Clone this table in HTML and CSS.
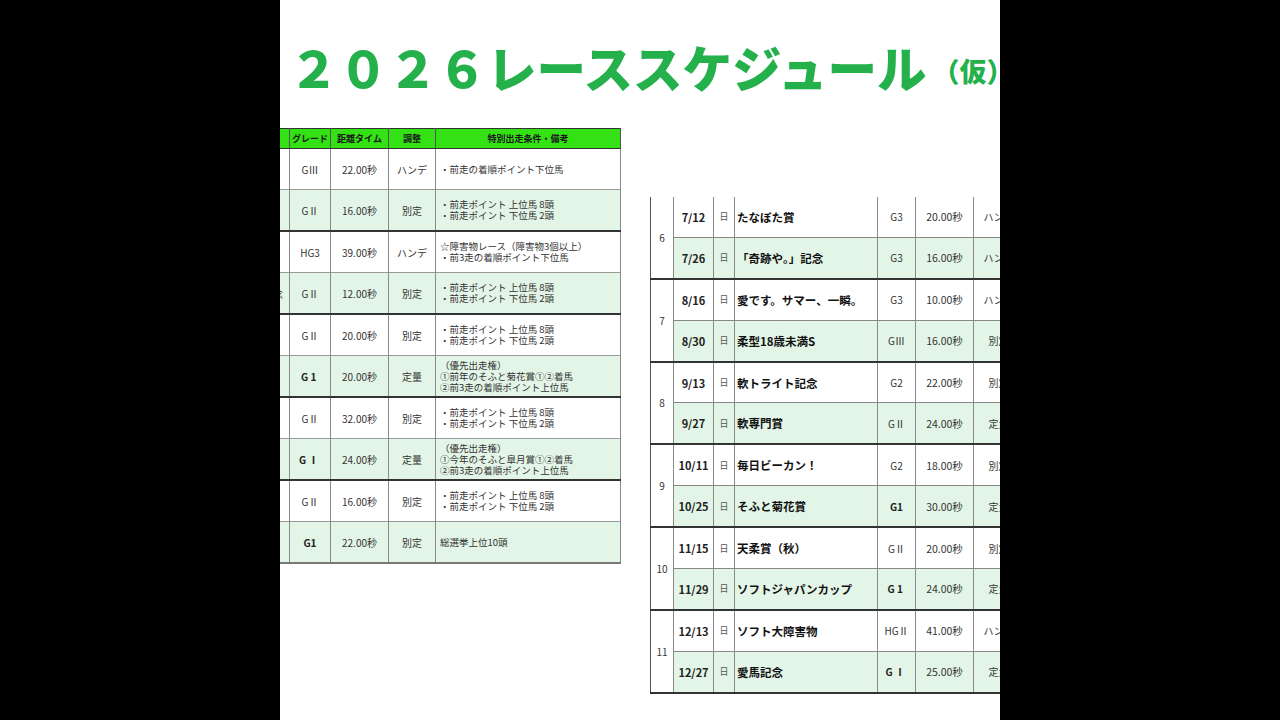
FILE: index.html
```html
<!DOCTYPE html>
<html lang="ja">
<head>
<meta charset="utf-8">
<title>2026レーススケジュール（仮）</title>
<link rel="stylesheet" href="styles.css">
</head>
<body>
<div class="panel">
  <h1 class="title"><span class="main">２０２６レーススケジュール</span><span class="sub">（仮）</span></h1>
  <div class="tables">
    <table class="left">
      <colgroup><col class="c0"><col class="c1"><col class="c2"><col class="c3"><col class="c4"></colgroup>
      <thead>
        <tr><th></th><th>グレード</th><th>距離タイム</th><th>調整</th><th>特別出走条件・備考</th></tr>
      </thead>
      <tbody>
        <tr class="w first"><td></td><td>GⅢ</td><td>22.00秒</td><td>ハンデ</td><td class="note">・前走の着順ポイント下位馬</td></tr>
        <tr class="g"><td></td><td>GⅡ</td><td>16.00秒</td><td>別定</td><td class="note">・前走ポイント 上位馬 8頭<br>・前走ポイント 下位馬 2頭</td></tr>
        <tr class="w pair"><td></td><td>HG3</td><td>39.00秒</td><td>ハンデ</td><td class="note">☆障害物レース（障害物3個以上）<br>・前3走の着順ポイント下位馬</td></tr>
        <tr class="g"><td class="peek">念</td><td>GⅡ</td><td>12.00秒</td><td>別定</td><td class="note">・前走ポイント 上位馬 8頭<br>・前走ポイント 下位馬 2頭</td></tr>
        <tr class="w pair"><td></td><td>GⅡ</td><td>20.00秒</td><td>別定</td><td class="note">・前走ポイント 上位馬 8頭<br>・前走ポイント 下位馬 2頭</td></tr>
        <tr class="g"><td></td><td class="b wide">G1</td><td>20.00秒</td><td>定量</td><td class="note">（優先出走権）<br>①前年のそふと菊花賞①②着馬<br>②前3走の着順ポイント上位馬</td></tr>
        <tr class="w pair"><td></td><td>GⅡ</td><td>32.00秒</td><td>別定</td><td class="note">・前走ポイント 上位馬 8頭<br>・前走ポイント 下位馬 2頭</td></tr>
        <tr class="g"><td></td><td class="b wide">GⅠ</td><td>24.00秒</td><td>定量</td><td class="note">（優先出走権）<br>①今年のそふと皐月賞①②着馬<br>②前3走の着順ポイント上位馬</td></tr>
        <tr class="w pair"><td></td><td>GⅡ</td><td>16.00秒</td><td>別定</td><td class="note">・前走ポイント 上位馬 8頭<br>・前走ポイント 下位馬 2頭</td></tr>
        <tr class="g last"><td></td><td class="b">G1</td><td>22.00秒</td><td>別定</td><td class="note">総選挙上位10頭</td></tr>
      </tbody>
    </table>

    <table class="right">
      <colgroup><col class="m"><col class="d"><col class="wd"><col class="n"><col class="gr"><col class="t"><col class="a"></colgroup>
      <tbody>
        <tr class="w top"><td class="mon" rowspan="2">6</td><td class="date">7/12</td><td class="day">日</td><td class="name">たなぼた賞</td><td class="grade">G3</td><td class="time">20.00秒</td><td class="adj">ハンデ</td></tr>
        <tr class="g"><td class="date">7/26</td><td class="day">日</td><td class="name">「奇跡や。」記念</td><td class="grade">G3</td><td class="time">16.00秒</td><td class="adj">ハンデ</td></tr>
        <tr class="w pair"><td class="mon" rowspan="2">7</td><td class="date">8/16</td><td class="day">日</td><td class="name">愛です。サマー、一瞬。</td><td class="grade">G3</td><td class="time">10.00秒</td><td class="adj">ハンデ</td></tr>
        <tr class="g"><td class="date">8/30</td><td class="day">日</td><td class="name">柔型18歳未満S</td><td class="grade">GⅢ</td><td class="time">16.00秒</td><td class="adj">別定</td></tr>
        <tr class="w pair"><td class="mon" rowspan="2">8</td><td class="date">9/13</td><td class="day">日</td><td class="name">軟トライト記念</td><td class="grade">G2</td><td class="time">22.00秒</td><td class="adj">別定</td></tr>
        <tr class="g"><td class="date">9/27</td><td class="day">日</td><td class="name">軟専門賞</td><td class="grade">GⅡ</td><td class="time">24.00秒</td><td class="adj">定量</td></tr>
        <tr class="w pair"><td class="mon" rowspan="2">9</td><td class="date">10/11</td><td class="day">日</td><td class="name">毎日ビーカン！</td><td class="grade">G2</td><td class="time">18.00秒</td><td class="adj">別定</td></tr>
        <tr class="g"><td class="date">10/25</td><td class="day">日</td><td class="name">そふと菊花賞</td><td class="grade b">G1</td><td class="time">30.00秒</td><td class="adj">定量</td></tr>
        <tr class="w pair"><td class="mon" rowspan="2">10</td><td class="date">11/15</td><td class="day">日</td><td class="name">天柔賞（秋）</td><td class="grade">GⅡ</td><td class="time">20.00秒</td><td class="adj">別定</td></tr>
        <tr class="g"><td class="date">11/29</td><td class="day">日</td><td class="name">ソフトジャパンカップ</td><td class="grade b wide">G1</td><td class="time">24.00秒</td><td class="adj">定量</td></tr>
        <tr class="w pair"><td class="mon endmon" rowspan="2">11</td><td class="date">12/13</td><td class="day">日</td><td class="name">ソフト大障害物</td><td class="grade">HGⅡ</td><td class="time">41.00秒</td><td class="adj">ハンデ</td></tr>
        <tr class="g last"><td class="date">12/27</td><td class="day">日</td><td class="name">愛馬記念</td><td class="grade b wide">GⅠ</td><td class="time">25.00秒</td><td class="adj">定量</td></tr>
      </tbody>
    </table>
  </div>
</div>
</body>
</html>
```

FILE: styles.css
```css
html, body {
  margin: 0;
  padding: 0;
  background: #000;
}
body {
  display: flex;
  justify-content: center;
  font-family: "Noto Sans CJK JP", "Noto Sans", sans-serif;
  color: #333;
}
.panel {
  width: 720px;
  height: 720px;
  background: #fff;
  overflow: hidden;
}
.title {
  margin: 0;
  box-sizing: border-box;
  height: 128px;
  padding: 6px 0 0 9px;
  display: flex;
  align-items: center;
  white-space: nowrap;
  color: #24b14b;
  font-weight: 900;
  line-height: 1;
}
.title .main {
  font-size: 49.5px;
  letter-spacing: 0;
}
.title .sub {
  font-size: 27px;
  margin-top: 6px;
  margin-left: 6px;
}
.tables {
  display: flex;
  align-items: flex-start;
  gap: 29px;
}
table {
  border-collapse: collapse;
  table-layout: fixed;
  flex: none;
}
td, th {
  padding: 0;
  text-align: center;
  vertical-align: middle;
  border-left: 1px solid #8a8a8a;
  border-right: 1px solid #8a8a8a;
  white-space: nowrap;
  overflow: hidden;
}
tr.w td { background: #fff; }
tr.g td { background: #e3f5e7; }

/* left table */
.left {
  width: 371px;
  margin-left: -31px;
  font-size: 10px;
}
.left .c0 { width: 40px; }
.left .c1 { width: 41px; }
.left .c2 { width: 58px; }
.left .c3 { width: 47px; }
.left .c4 { width: 185px; }
.left thead th {
  height: 19px;
  background: #33e114;
  color: #1a1a1a;
  font-size: 9px;
  font-weight: 700;
  border-top: 1px solid #333;
  border-bottom: 1px solid #333;
  border-left: 1px solid #555;
  border-right: 1px solid #555;
}
.left tbody td {
  height: 40px;
  border-top: 1px solid #9a9a9a;
}
.left tbody tr.pair td { border-top: 2px solid #333; }
.left tbody tr.last td { border-bottom: 2px solid #777; }
.left td.note {
  text-align: left;
  padding-left: 4px;
  line-height: 11px;
  font-size: 9.5px;
}
.left td.peek {
  text-align: right;
  font-size: 10px;
  padding-right: 6px;
}
.b { font-weight: 700; color: #222; }
.wide { letter-spacing: 2.5px; }

/* right table */
.right {
  width: 373px;
  margin-top: 69px;
}
.right .m { width: 23px; }
.right .d { width: 40px; }
.right .wd { width: 21px; }
.right .n { width: 143px; }
.right .gr { width: 38px; }
.right .t { width: 58px; }
.right .a { width: 50px; }
.right td {
  height: 39.9px;
  border-top: 1px solid #888;
  font-size: 10.5px;
}
.right tr.top td { border-top: none; }
.right tr.pair td { border-top: 2px solid #333; }
.right tr.last td,
.right td.endmon { border-bottom: 2px solid #333; }
.right td.mon {
  background: #fff;
  font-size: 10px;
  color: #333;
  border-left: 1.5px solid #555;
}
.right td.date {
  font-weight: 700;
  font-size: 11px;
  color: #222;
}
.right td.day {
  font-size: 9px;
  color: #555;
}
.right td.name {
  text-align: left;
  padding-left: 2px;
  font-weight: 700;
  font-size: 11.5px;
  color: #111;
}
.right td.grade { font-size: 10px; }
.right td.time { font-size: 10.5px; }
.right td.adj { font-size: 10px; }
```
